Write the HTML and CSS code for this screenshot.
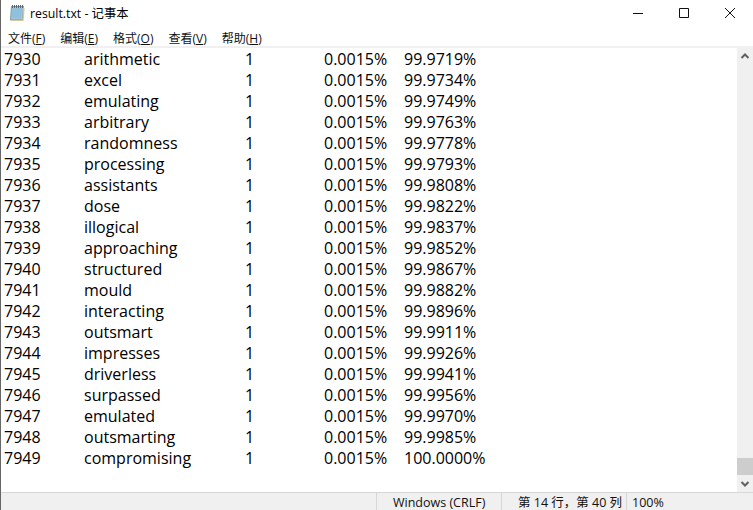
FILE: index.html
```html
<!DOCTYPE html>
<html lang="zh">
<head>
<meta charset="utf-8">
<title>result.txt - 记事本</title>
<link rel="stylesheet" href="styles.css">
</head>
<body>
<div class="window">
  <header class="titlebar">
    <svg class="app-icon" width="18" height="18" viewBox="0 0 18 18">
      <path d="M2.500 2.500h12l-1.200 13.500H1.500z" fill="#a9c9dc" stroke="#7d97a6" stroke-width="1"/>
      <path d="M3.500 4h9.500l-1 10.500H2.500z" fill="#8fc0dc"/>
      <path d="M14.200 3.500l1.500 .6-1.100 12.900H3.500l-.6-1h10.400z" fill="#d8c79c"/>
      <path d="M3.500 1v3M5.500 1v3M7.500 1v3M9.500 1v3M11.500 1v3M13.500 1v3" stroke="#56656e" stroke-width="1"/>
    </svg>
    <span class="title">result.txt - 记事本</span>
    <div class="controls">
      <span class="control"><svg width="12" height="12" viewBox="0 0 12 12"><path d="M1 6.500h10" stroke="#111" fill="none"/></svg></span>
      <span class="control"><svg width="12" height="12" viewBox="0 0 12 12"><path d="M1.500 1.500h9v9h-9z" stroke="#111" fill="none"/></svg></span>
      <span class="control"><svg width="12" height="12" viewBox="0 0 12 12"><path d="M1 1l10 10M11 1L1 11" stroke="#111" fill="none"/></svg></span>
    </div>
  </header>
  <nav class="menubar">
    <span>文件(<u>F</u>)</span><span>编辑(<u>E</u>)</span><span>格式(<u>O</u>)</span><span>查看(<u>V</u>)</span><span>帮助(<u>H</u>)</span>
  </nav>
  <div class="editor">
    <div class="text" id="rows"></div>
    <div class="scrollbar">
      <svg class="arrow" width="16" height="17" viewBox="0 0 16 17"><path d="M4.500 10L8 6.500 11.500 10" stroke="#606060" stroke-width="2" fill="none"/></svg>
      <div class="track"><div class="thumb"></div></div>
      <svg class="arrow" width="16" height="17" viewBox="0 0 16 17"><path d="M4.500 7L8 10.500 11.500 7" stroke="#606060" stroke-width="2" fill="none"/></svg>
    </div>
  </div>
  <footer class="statusbar">
    <span class="cell enc">Windows (CRLF)</span>
    <span class="cell pos">第 14 行，第 40 列</span>
    <span class="cell zoom">100%</span>
  </footer>
</div>
<script src="app.js"></script>
</body>
</html>
```
FILE: styles.css
```css
* { box-sizing: border-box; }
html, body { margin: 0; height: 100%; }
body { background: #fff; overflow: hidden; font-family: "Open Sans", "Noto Sans CJK SC", sans-serif; color: #000; }
.window { width: 753px; height: 510px; display: flex; flex-direction: column; border-left: 1px solid #666; }
.titlebar { height: 29px; flex: none; display: flex; align-items: center; padding: 0 0 4px 8px; }
.app-icon { flex: none; }
.title { margin-left: 3px; font-size: 12.300px; color: #000; }
.controls { margin-left: auto; display: flex; }
.control { width: 46px; height: 25px; display: flex; align-items: center; justify-content: center; }
.menubar { height: 17px; flex: none; display: flex; padding: 1px 0 0 7px; gap: 15px; font-size: 12px; line-height: 17px; color: #111; }
.menubar span { display: block; }
.menubar u { text-underline-offset: 1px; }
.editor { flex: 1; min-height: 0; display: flex; border-top: 2px solid #f0f0f0; }
.text { flex: 1; padding: 1px 0 0 3px; font-size: 16px; line-height: 21px; color: #000; }
.row { display: grid; grid-template-columns: 80px 161px 79px 80px 1fr; height: 21px; }
.scrollbar { width: 16px; flex: none; background: #f0f0f0; display: flex; flex-direction: column; }
.arrow { flex: none; display: block; }
.track { flex: 1; display: flex; flex-direction: column; justify-content: flex-end; }
.thumb { height: 17px; background: #cdcdcd; }
.statusbar { height: 18px; flex: none; border-top: 1px solid #d7d7d7; background: #f0f0f0; display: flex; justify-content: flex-end; font-size: 12.500px; line-height: 20px; color: #111; }
.cell { display: block; border-left: 1px solid #d7d7d7; white-space: nowrap; }
.enc { width: 125px; padding-left: 16px; }
.pos { width: 125px; padding-left: 16px; }
.zoom { width: 127px; padding-left: 5px; }
```
FILE: app.js
```js
var data = [
  [7930,"arithmetic","99.9719%"],[7931,"excel","99.9734%"],[7932,"emulating","99.9749%"],
  [7933,"arbitrary","99.9763%"],[7934,"randomness","99.9778%"],[7935,"processing","99.9793%"],
  [7936,"assistants","99.9808%"],[7937,"dose","99.9822%"],[7938,"illogical","99.9837%"],
  [7939,"approaching","99.9852%"],[7940,"structured","99.9867%"],[7941,"mould","99.9882%"],
  [7942,"interacting","99.9896%"],[7943,"outsmart","99.9911%"],[7944,"impresses","99.9926%"],
  [7945,"driverless","99.9941%"],[7946,"surpassed","99.9956%"],[7947,"emulated","99.9970%"],
  [7948,"outsmarting","99.9985%"],[7949,"compromising","100.0000%"]
];
var root = document.getElementById("rows");
data.forEach(function (d) {
  var row = document.createElement("div");
  row.className = "row";
  [d[0], d[1], "1", "0.0015%", d[2]].forEach(function (v) {
    var c = document.createElement("span");
    c.textContent = v;
    row.appendChild(c);
  });
  root.appendChild(row);
});
```
